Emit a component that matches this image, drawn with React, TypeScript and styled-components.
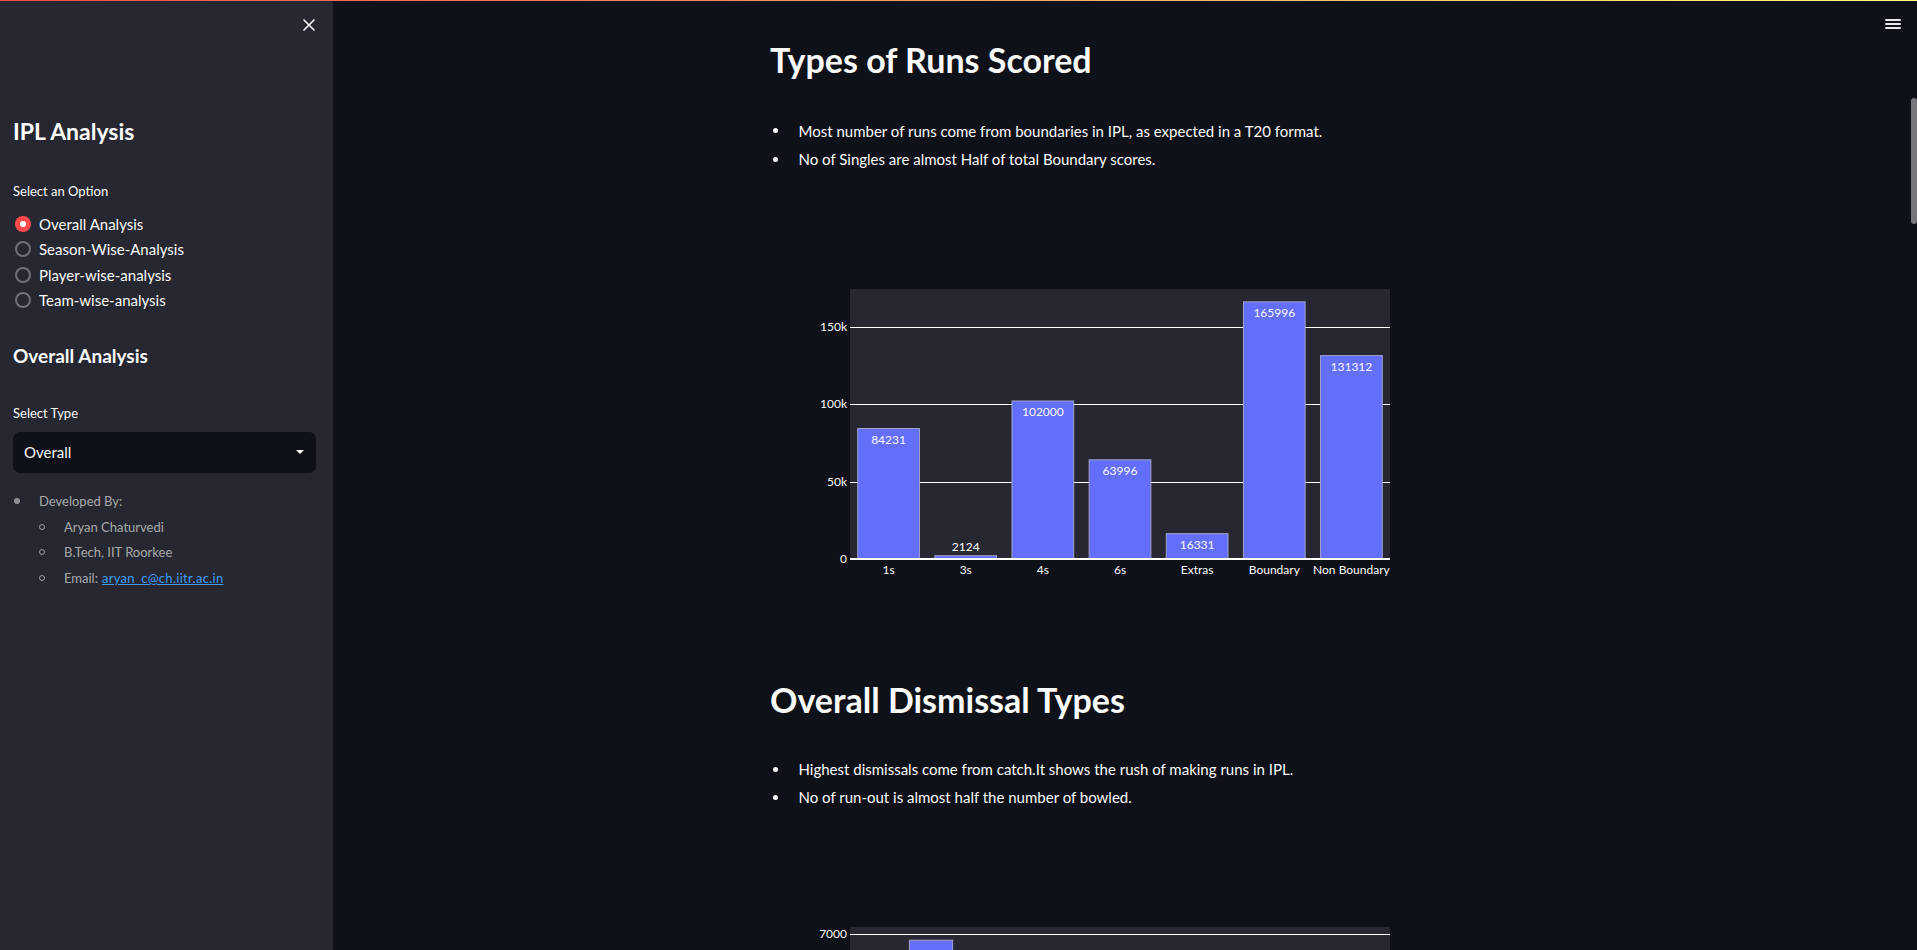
import React from "react";
import styled, { createGlobalStyle } from "styled-components";

const GlobalStyle = createGlobalStyle`
  html, body {
    margin: 0;
    padding: 0;
    background: #0e1117;
    overflow: hidden;
  }
  body {
    font-family: Lato, "Noto Sans", sans-serif;
    color: #fafafa;
  }
  * { box-sizing: border-box; }
`;

const Shell = styled.div`
  position: relative;
  display: flex;
  width: 100vw;
  height: 100vh;
  overflow: hidden;
`;

const Decoration = styled.div`
  position: absolute;
  top: 0;
  left: 0;
  right: 0;
  height: 1px;
  background: linear-gradient(90deg, #ff4b4b, #fffd80);
  z-index: 10;
`;

const Sidebar = styled.aside`
  flex: 0 0 333px;
  width: 333px;
  height: 100%;
  background: #262730;
  display: flex;
  flex-direction: column;
  padding: 0 17px 0 13px;
`;

const SidebarHeader = styled.div`
  height: 50px;
  display: flex;
  justify-content: flex-end;
  align-items: center;
`;

const IconButton = styled.button`
  width: 14px;
  height: 14px;
  padding: 0;
  border: 0;
  background: transparent;
  display: flex;
  align-items: center;
  justify-content: center;
  color: #fafafa;
  cursor: pointer;
`;

const SidebarTitle = styled.h1`
  margin: 68px 0 0;
  font-size: 23px;
  font-weight: 700;
  line-height: 1.2;
  color: #fafafa;
`;

const SidebarSubtitle = styled.h3`
  margin: 32px 0 0;
  font-size: 19px;
  font-weight: 700;
  line-height: 1.2;
  color: #fafafa;
`;

const WidgetLabel = styled.div<{ $top: number }>`
  margin-top: ${(p) => p.$top}px;
  font-size: 13px;
  line-height: 1.2;
  color: #fafafa;
`;

const RadioGroup = styled.div`
  margin-top: 12px;
  display: flex;
  flex-direction: column;
`;

const RadioRow = styled.label`
  height: 25.5px;
  display: flex;
  align-items: center;
  gap: 8px;
  padding-left: 2px;
  font-size: 15px;
  color: #fafafa;
`;

const RadioCircle = styled.span<{ $checked: boolean }>`
  width: 16px;
  height: 16px;
  border-radius: 50%;
  flex: 0 0 16px;
  display: flex;
  align-items: center;
  justify-content: center;
  background: ${(p) => (p.$checked ? "#ff4b4b" : "transparent")};
  border: ${(p) => (p.$checked ? "none" : "2px solid #6f7178")};
  &::after {
    content: "";
    display: ${(p) => (p.$checked ? "block" : "none")};
    width: 6px;
    height: 6px;
    border-radius: 50%;
    background: #ffffff;
  }
`;

const SelectBox = styled.div`
  margin-top: 11px;
  height: 40.4px;
  background: #0e1117;
  border-radius: 7px;
  display: flex;
  align-items: center;
  justify-content: space-between;
  padding: 0 12px 0 11px;
  font-size: 15px;
  color: #fafafa;
`;

const Caret = styled.span`
  width: 0;
  height: 0;
  border-left: 4px solid transparent;
  border-right: 4px solid transparent;
  border-top: 4px solid #fafafa;
`;

const InfoList = styled.div`
  margin-top: 15.8px;
  display: flex;
  flex-direction: column;
  font-size: 13px;
  color: rgba(250, 250, 250, 0.62);
`;

const InfoRow = styled.div<{ $level: number }>`
  height: 25.5px;
  display: flex;
  align-items: center;
  padding-left: ${(p) => (p.$level === 0 ? 1 : 26)}px;
`;

const InfoMarker = styled.span<{ $level: number }>`
  width: 6px;
  height: 6px;
  border-radius: 50%;
  flex: 0 0 6px;
  margin-right: 19px;
  background: ${(p) => (p.$level === 0 ? "rgba(250,250,250,0.5)" : "transparent")};
  border: ${(p) => (p.$level === 0 ? "none" : "1.2px solid rgba(250,250,250,0.55)")};
`;

const MailLink = styled.a`
  color: #3d9df3;
  text-decoration: underline;
  margin-left: 4px;
  letter-spacing: 0.3px;
`;

const Main = styled.main`
  position: relative;
  flex: 1;
  height: 100%;
  overflow: hidden;
  background: #0e1117;
`;

const MenuButton = styled.button`
  position: absolute;
  top: 17px;
  right: 16px;
  width: 16px;
  height: 14px;
  border: 0;
  background: transparent;
  display: flex;
  flex-direction: column;
  justify-content: space-between;
  padding: 2px 0;
  cursor: pointer;
  span {
    display: block;
    height: 1.6px;
    background: #e8e8ea;
    border-radius: 1px;
  }
`;

const ScrollThumb = styled.div`
  position: absolute;
  top: 98px;
  right: 0;
  width: 6px;
  height: 126px;
  border-radius: 3px;
  background: #77787d;
`;

const Content = styled.div`
  width: 710px;
  margin: 0 auto;
  padding-top: 40.3px;
`;

const Section = styled.section<{ $top: number }>`
  margin-top: ${(p) => p.$top}px;
`;

const Heading = styled.h2`
  margin: 0;
  font-size: 34px;
  font-weight: 700;
  line-height: 1.2;
  color: #fafafa;
`;

const BulletList = styled.ul<{ $top: number }>`
  list-style: none;
  margin: ${(p) => p.$top}px 0 0;
  padding: 0;
`;

const BulletItem = styled.li`
  display: flex;
  align-items: center;
  height: 28.3px;
  font-size: 15px;
  color: #fafafa;
  &::before {
    content: "";
    width: 5px;
    height: 5px;
    border-radius: 50%;
    background: #fafafa;
    margin: 0 21px 0 2.5px;
    flex: 0 0 5px;
  }
`;

const ChartSvg = styled.svg<{ $top: number }>`
  display: block;
  margin-top: ${(p) => p.$top}px;
  font-family: Lato, "Noto Sans", sans-serif;
`;

type BarDatum = { label: string; value: number };

function BarChart({
  bars,
  ymax,
  ticks,
  fmt,
  showValues,
  top,
}: {
  bars: BarDatum[];
  ymax: number;
  ticks: number[];
  fmt: (n: number) => string;
  showValues: boolean;
  top: number;
}) {
  const W = 700;
  const H = 450;
  const L = 80;
  const T = 100;
  const PW = 540;
  const PH = 270;
  const slot = PW / bars.length;
  const bw = slot * 0.8;
  const y = (v: number) => T + PH - (v / ymax) * PH;
  const crisp = (v: number) => Math.round(v) + 0.5;
  return (
    <ChartSvg $top={top} width={W} height={H} viewBox={`0 0 ${W} ${H}`}>
      <rect x={L} y={T} width={PW} height={PH} fill="#262730" />
      {ticks
        .filter((t) => t > 0)
        .map((t) => (
          <line
            key={t}
            x1={L}
            x2={L + PW}
            y1={crisp(y(t))}
            y2={crisp(y(t))}
            stroke="#ffffff"
            strokeWidth={1}
          />
        ))}
      {bars.map((b, i) => {
        const x = L + i * slot + (slot - bw) / 2;
        const barTop = y(b.value);
        const h = T + PH - barTop;
        const inside = h > 20;
        return (
          <g key={b.label}>
            <rect
              x={x}
              y={barTop}
              width={bw}
              height={h}
              fill="#636efa"
              stroke="#a2a5cc"
              strokeWidth={1}
            />
            {showValues && (
              <text
                x={x + bw / 2}
                y={inside ? barTop + 15.5 : barTop - 5}
                textAnchor="middle"
                fontSize={12}
                fill="#fafafa"
              >
                {b.value}
              </text>
            )}
          </g>
        );
      })}
      <line x1={L} x2={L + PW} y1={T + PH} y2={T + PH} stroke="#ffffff" strokeWidth={2} />
      {showValues &&
        bars.map((b, i) => (
          <text
            key={b.label}
            x={L + i * slot + slot / 2}
            y={T + PH + 15}
            textAnchor="middle"
            fontSize={12}
            fill="#fafafa"
          >
            {b.label}
          </text>
        ))}
      {ticks.map((t) => (
        <text
          key={t}
          x={L - 3}
          y={y(t) + 4}
          textAnchor="end"
          fontSize={12}
          fill="#fafafa"
        >
          {fmt(t)}
        </text>
      ))}
    </ChartSvg>
  );
}

const runs: BarDatum[] = [
  { label: "1s", value: 84231 },
  { label: "3s", value: 2124 },
  { label: "4s", value: 102000 },
  { label: "6s", value: 63996 },
  { label: "Extras", value: 16331 },
  { label: "Boundary", value: 165996 },
  { label: "Non Boundary", value: 131312 },
];

const dismissals: BarDatum[] = [
  { label: "bowled", value: 1700 },
  { label: "caught", value: 6841 },
  { label: "caught and bowled", value: 269 },
  { label: "hit wicket", value: 12 },
  { label: "lbw", value: 571 },
  { label: "obstructing the field", value: 3 },
  { label: "retired hurt", value: 12 },
  { label: "retired out", value: 2 },
  { label: "run out", value: 893 },
  { label: "stumped", value: 294 },
];

const radios = [
  "Overall Analysis",
  "Season-Wise-Analysis",
  "Player-wise-analysis",
  "Team-wise-analysis",
];

export default function App() {
  return (
    <>
      <GlobalStyle />
      <Shell>
        <Decoration />
        <Sidebar>
          <SidebarHeader>
            <IconButton aria-label="Close sidebar">
              <svg width="14" height="14" viewBox="0 0 14 14">
                <path d="M2 2 L12 12 M12 2 L2 12" stroke="#fafafa" strokeWidth="1.6" strokeLinecap="round" />
              </svg>
            </IconButton>
          </SidebarHeader>
          <SidebarTitle>IPL Analysis</SidebarTitle>
          <WidgetLabel $top={38}>Select an Option</WidgetLabel>
          <RadioGroup>
            {radios.map((r, i) => (
              <RadioRow key={r}>
                <RadioCircle $checked={i === 0} />
                {r}
              </RadioRow>
            ))}
          </RadioGroup>
          <SidebarSubtitle>Overall Analysis</SidebarSubtitle>
          <WidgetLabel $top={37.7}>Select Type</WidgetLabel>
          <SelectBox>
            <span>Overall</span>
            <Caret />
          </SelectBox>
          <InfoList>
            <InfoRow $level={0}>
              <InfoMarker $level={0} />
              Developed By:
            </InfoRow>
            <InfoRow $level={1}>
              <InfoMarker $level={1} />
              Aryan Chaturvedi
            </InfoRow>
            <InfoRow $level={1}>
              <InfoMarker $level={1} />
              B.Tech, IIT Roorkee
            </InfoRow>
            <InfoRow $level={1}>
              <InfoMarker $level={1} />
              Email:<MailLink href="#">aryan_c@ch.iitr.ac.in</MailLink>
            </InfoRow>
          </InfoList>
        </Sidebar>
        <Main>
          <MenuButton aria-label="Main menu">
            <span />
            <span />
            <span />
          </MenuButton>
          <ScrollThumb />
          <Content>
            <Section $top={0}>
              <Heading>Types of Runs Scored</Heading>
              <BulletList $top={35.5}>
                <BulletItem>Most number of runs come from boundaries in IPL, as expected in a T20 format.</BulletItem>
                <BulletItem>No of Singles are almost Half of total Boundary scores.</BulletItem>
              </BulletList>
              <BarChart
                bars={runs}
                ymax={174296}
                ticks={[0, 50000, 100000, 150000]}
                fmt={(n) => (n === 0 ? "0" : `${n / 1000}k`)}
                showValues={true}
                top={15.5}
              />
            </Section>
            <Section $top={41.5}>
              <Heading>Overall Dismissal Types</Heading>
              <BulletList $top={34}>
                <BulletItem>Highest dismissals come from catch.It shows the rush of making runs in IPL.</BulletItem>
                <BulletItem>No of run-out is almost half the number of bowled.</BulletItem>
              </BulletList>
              <BarChart
                bars={dismissals}
                ymax={7193}
                ticks={[7000]}
                fmt={(n) => `${n}`}
                showValues={false}
                top={15.5}
              />
            </Section>
          </Content>
        </Main>
      </Shell>
    </>
  );
}
